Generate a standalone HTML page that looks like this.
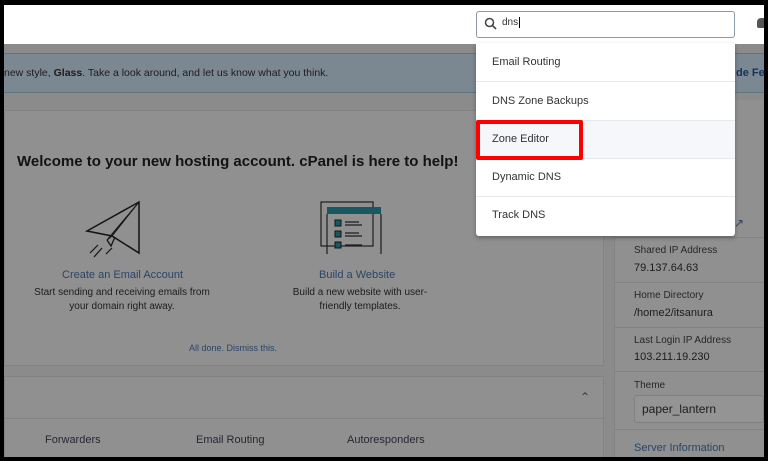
<!DOCTYPE html>
<html><head><style>
*{margin:0;padding:0;box-sizing:border-box}
html,body{background:#000}
body{width:768px;height:461px;position:relative;overflow:hidden;font-family:"Liberation Sans",sans-serif}
.a{position:absolute}
</style></head><body>
<div class="a" style="left:4px;top:5px;width:760px;height:452px;background-color:#f0f0f0"></div>
<div class="a" style="left:4px;top:53px;width:760px;height:40px;background-color:#d4ebfb;border-top:1px solid #a5c6de;border-bottom:1px solid #a5c6de"></div>
<div class="a" style="left:4px;top:67px;color:#333;font-size:10.5px">new style, <b>Glass</b>. Take a look around, and let us know what you think.</div>
<div class="a" style="left:736px;top:67px;font-size:11px;font-weight:bold;color:#1e5a9e">de Fe</div>
<div class="a" style="left:4px;top:110px;width:600px;height:256px;background-color:#f8f8f8;border:1px solid #e2e2e2"></div>
<div class="a" style="left:17px;top:153px;font-size:15px;font-weight:bold;color:#222">Welcome to your new hosting account. cPanel is here to help!</div>
<svg class="a" style="left:84px;top:200px" width="58" height="60" viewBox="0 0 58 60"><path d="M55 2L3 31l25 5 27 17z" fill="none" stroke="#222" stroke-width="1.5"/><path d="M55 2L23 40l5-4z" fill="#2a9aa8" stroke="#222" stroke-width="1"/><path d="M23 40l4 6 4-9" fill="none" stroke="#222" stroke-width="1.3"/><path d="M14 45l-8 8M18 48l-8 9M28 48l-6 6" stroke="#222" stroke-width="1.2"/></svg>
<svg class="a" style="left:320px;top:200px" width="62" height="54" viewBox="0 0 62 54"><rect x="1" y="2" width="52" height="44" fill="none" stroke="#333" stroke-width="1.2"/><rect x="7" y="7" width="54" height="7" fill="#2a9aa8"/><path d="M7 14v46M61 14v46" stroke="#333" stroke-width="1.2"/><rect x="15" y="20" width="6" height="6" fill="#2a9aa8" stroke="#222"/><rect x="15" y="31" width="6" height="6" fill="#2a9aa8" stroke="#222"/><rect x="15" y="42" width="6" height="6" fill="#2a9aa8" stroke="#222"/><path d="M25 22h14M25 25h17M25 33h14M25 36h17M25 45h17" stroke="#333" stroke-width="1.2"/></svg>
<div class="a" style="left:62px;top:269px;font-size:11px;color:#4a78b0">Create an Email Account</div>
<div class="a" style="left:30px;top:286px;width:184px;text-align:center;line-height:14px;font-size:10px;color:#333">Start sending and receiving emails from your domain right away.</div>
<div class="a" style="left:319px;top:269px;font-size:11px;color:#4a78b0">Build a Website</div>
<div class="a" style="left:285px;top:286px;width:150px;text-align:center;line-height:14px;font-size:10px;color:#333">Build a new website with user-friendly templates.</div>
<div class="a" style="left:189px;top:343px;font-size:9px;color:#4a78b0">All done. Dismiss this.</div>
<div class="a" style="left:4px;top:376px;width:600px;height:81px;background-color:#f8f8f8;border:1px solid #e2e2e2;border-bottom:none"></div>
<div class="a" style="left:4px;top:418px;width:600px;height:1px;background:#e0e0e0"></div>
<div class="a" style="left:580px;top:390px;font-size:12px;color:#666">&#8963;</div>
<div class="a" style="left:45px;top:434px;font-size:11px;color:#445">Forwarders</div>
<div class="a" style="left:196px;top:434px;font-size:11px;color:#445">Email Routing</div>
<div class="a" style="left:347px;top:434px;font-size:11px;color:#445">Autoresponders</div>
<div class="a" style="left:614px;top:100px;width:150px;height:357px;background-color:#f8f8f8;border-left:1px solid #e2e2e2"></div>
<div class="a" style="left:734px;top:216px;font-size:12px;color:#4a78b0">&#8599;</div>
<div class="a" style="left:614px;top:237px;width:150px;height:1px;background:#e0e0e0"></div>
<div class="a" style="left:634px;top:245px;font-size:10px;color:#444">Shared IP Address</div>
<div class="a" style="left:634px;top:262px;font-size:11px;color:#333">79.137.64.63</div>
<div class="a" style="left:614px;top:282px;width:150px;height:1px;background:#e0e0e0"></div>
<div class="a" style="left:634px;top:290px;font-size:10px;color:#444">Home Directory</div>
<div class="a" style="left:634px;top:307px;font-size:11px;color:#333">/home2/itsanura</div>
<div class="a" style="left:614px;top:327px;width:150px;height:1px;background:#e0e0e0"></div>
<div class="a" style="left:634px;top:335px;font-size:10px;color:#444">Last Login IP Address</div>
<div class="a" style="left:634px;top:351px;font-size:11px;color:#333">103.211.19.230</div>
<div class="a" style="left:614px;top:371px;width:150px;height:1px;background:#e0e0e0"></div>
<div class="a" style="left:634px;top:380px;font-size:10px;color:#444">Theme</div>
<div class="a" style="left:634px;top:395px;width:130px;height:28px;background-color:#fff;border:1px solid #ddd;border-radius:3px"></div>
<div class="a" style="left:642px;top:402px;font-size:12px;color:#333">paper_lantern</div>
<div class="a" style="left:614px;top:429px;width:150px;height:1px;background:#e0e0e0"></div>
<div class="a" style="left:634px;top:442px;font-size:11px;color:#4a78b0">Server Information</div>
<!-- dim overlay -->
<div class="a" style="left:4px;top:44px;width:760px;height:413px;background:rgba(0,0,0,0.42)"></div>
<div class="a" style="left:4px;top:5px;width:760px;height:39px;background:#fff"></div>
<div class="a" style="left:476px;top:11px;width:259px;height:27px;border:1px solid #8a9aa8;border-radius:3px;background:#fff"></div>
<svg class="a" style="left:484px;top:17px" width="13" height="13" viewBox="0 0 13 13"><circle cx="5.5" cy="5.5" r="4" fill="none" stroke="#444" stroke-width="1.5"/><path d="M8.5 8.5l3.5 3.5" stroke="#444" stroke-width="1.6"/></svg>
<div class="a" style="left:502px;top:17px;font-size:10px;color:#333">dns<span style="border-left:1px solid #000;margin-left:1px"></span></div>
<div class="a" style="left:757px;top:18px;width:7px;height:10px;background:#555;border-radius:4px 0 0 2px"></div>
<div class="a" style="left:476px;top:43px;width:259px;height:193px;background:#fff;border-radius:0 0 3px 3px;box-shadow:0 2px 4px rgba(0,0,0,.3)">
 <div style="height:39px;border-bottom:1px solid #e6e9ed;padding:13px 0 0 16px;font-size:11px;color:#333">Email Routing</div>
 <div style="height:39px;border-bottom:1px solid #e6e9ed;padding:13px 0 0 16px;font-size:11px;color:#333">DNS Zone Backups</div>
 <div style="height:38px;border-bottom:1px solid #e6e9ed;background:#f5f7fa;padding:12px 0 0 16px;font-size:11px;color:#333">Zone Editor</div>
 <div style="height:38px;border-bottom:1px solid #e6e9ed;padding:12px 0 0 16px;font-size:11px;color:#333">Dynamic DNS</div>
 <div style="height:38px;padding:12px 0 0 16px;font-size:11px;color:#333">Track DNS</div>
</div>
<div class="a" style="left:476px;top:120px;width:107px;height:40px;border:4px solid #f00;border-radius:2px"></div>
</body></html>
